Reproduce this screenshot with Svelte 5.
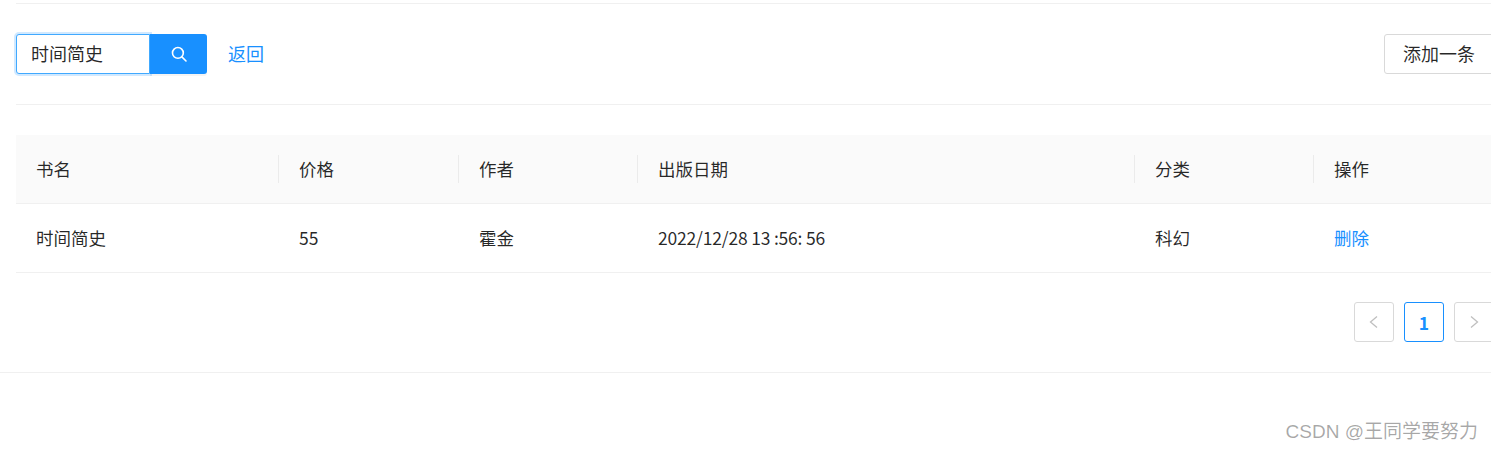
<script lang="ts">
  let keyword = $state('时间简史');

  const columns = ['书名', '价格', '作者', '出版日期', '分类', '操作'];
  const books = [
    { name: '时间简史', price: 55, author: '霍金', date: '2022/12/28 13 :56: 56', category: '科幻' }
  ];
</script>

<div class="page">
  <div class="content">
    <hr class="rule first" />

    <div class="toolbar">
      <div class="search">
        <input class="search-input" bind:value={keyword} />
        <button class="search-btn" aria-label="搜索">
          <svg viewBox="0 0 20 20" width="20" height="20" fill="none" stroke="#fff" stroke-width="1.6" stroke-linecap="round">
            <circle cx="8.9" cy="8.9" r="5.4" />
            <path d="M12.9 12.9 L17 17" />
          </svg>
        </button>
      </div>
      <a class="back" href="#back">返回</a>
      <button class="add-btn">添加一条</button>
    </div>

    <hr class="rule" />

    <table class="table">
      <colgroup>
        <col style="width: 263px" />
        <col style="width: 180px" />
        <col style="width: 179px" />
        <col style="width: 497px" />
        <col style="width: 179px" />
        <col />
      </colgroup>
      <thead>
        <tr>
          {#each columns as col}
            <th>{col}</th>
          {/each}
        </tr>
      </thead>
      <tbody>
        {#each books as book}
          <tr>
            <td>{book.name}</td>
            <td>{book.price}</td>
            <td>{book.author}</td>
            <td class="date">{book.date}</td>
            <td>{book.category}</td>
            <td><a class="del" href="#del">删除</a></td>
          </tr>
        {/each}
      </tbody>
    </table>

    <div class="pagination">
      <button class="page-btn" aria-label="上一页">
        <svg viewBox="0 0 16 16" width="16" height="16" fill="none" stroke="#bfbfbf" stroke-width="1.3">
          <path d="M11 2.5 L4.5 8 L11 13.5" />
        </svg>
      </button>
      <button class="page-btn active">1</button>
      <button class="page-btn" aria-label="下一页">
        <svg viewBox="0 0 16 16" width="16" height="16" fill="none" stroke="#bfbfbf" stroke-width="1.3">
          <path d="M5 2.5 L11.5 8 L5 13.5" />
        </svg>
      </button>
    </div>
  </div>

  <hr class="rule" />

  <div class="watermark">CSDN @王同学要努力</div>
</div>

<style>
  :global(body) {
    margin: 0;
    background: #fff;
    overflow: hidden;
  }
  .page {
    width: 1491px;
    height: 450px;
    overflow: hidden;
    font-family: "Noto Sans CJK SC", "Noto Sans", sans-serif;
    font-size: 17.5px;
    color: rgba(0, 0, 0, 0.85);
  }
  .content {
    width: 1480px;
    padding-top: 3px;
    padding-left: 16px;
  }
  .rule {
    height: 1px;
    margin: 0;
    border: none;
    background: #f0f0f0;
  }
  .first {
    width: 1475px;
  }
  .toolbar {
    display: flex;
    align-items: center;
    height: 40px;
    padding: 30px 0;
    font-size: 18px;
  }
  .search {
    display: flex;
    height: 40px;
  }
  .search-input {
    box-sizing: border-box;
    width: 134px;
    height: 40px;
    padding: 0 14px 2px;
    border: 1px solid #40a9ff;
    border-radius: 3px 0 0 3px;
    box-shadow: 0 0 0 2px rgba(24, 144, 255, 0.2);
    outline: none;
    font: inherit;
    color: rgba(0, 0, 0, 0.85);
  }
  .search-btn {
    display: flex;
    align-items: center;
    justify-content: center;
    width: 57px;
    height: 40px;
    padding: 0;
    border: none;
    border-radius: 0 3px 3px 0;
    background: #1890ff;
    box-shadow: 0 2px 0 rgba(0, 0, 0, 0.045);
  }
  .back {
    margin-left: 21px;
    padding-bottom: 2px;
    color: #1890ff;
    text-decoration: none;
  }
  .add-btn {
    box-sizing: border-box;
    width: 112px;
    height: 40px;
    margin-left: auto;
    padding: 0 2px 2px 0;
    border: 1px solid #d9d9d9;
    border-radius: 3px;
    background: #fff;
    font: inherit;
    color: rgba(0, 0, 0, 0.85);
  }
  .table {
    width: 100%;
    margin-top: 30px;
    border-collapse: separate;
    border-spacing: 0;
    table-layout: fixed;
  }
  .table th,
  .table td {
    box-sizing: border-box;
    height: 69px;
    padding: 0 20px 2px;
    border-bottom: 1px solid #f0f0f0;
    text-align: left;
    font-weight: 400;
  }
  .table th {
    position: relative;
    background: #fafafa;
  }
  .table th:not(:last-child)::after {
    content: '';
    position: absolute;
    top: 50%;
    right: 0;
    width: 1px;
    height: 28px;
    transform: translateY(-50%);
    background: rgba(0, 0, 0, 0.06);
  }
  .date {
    letter-spacing: -0.2px;
  }
  .del {
    color: #1890ff;
    text-decoration: none;
  }
  .pagination {
    display: flex;
    justify-content: flex-end;
    gap: 10px;
    padding: 29px 2px 30px 0;
  }
  .page-btn {
    display: flex;
    align-items: center;
    justify-content: center;
    box-sizing: border-box;
    width: 40px;
    height: 40px;
    padding: 0;
    border: 1px solid #d9d9d9;
    border-radius: 3px;
    background: #fff;
    font: inherit;
  }
  .active {
    border-color: #1890ff;
    color: #1890ff;
    font-weight: 700;
  }
  .watermark {
    margin: 47px 13px 0 0;
    text-align: right;
    font-family: "Liberation Sans", "Noto Sans CJK SC", sans-serif;
    font-size: 19px;
    line-height: 24px;
    color: rgba(0, 0, 0, 0.35);
  }
</style>
